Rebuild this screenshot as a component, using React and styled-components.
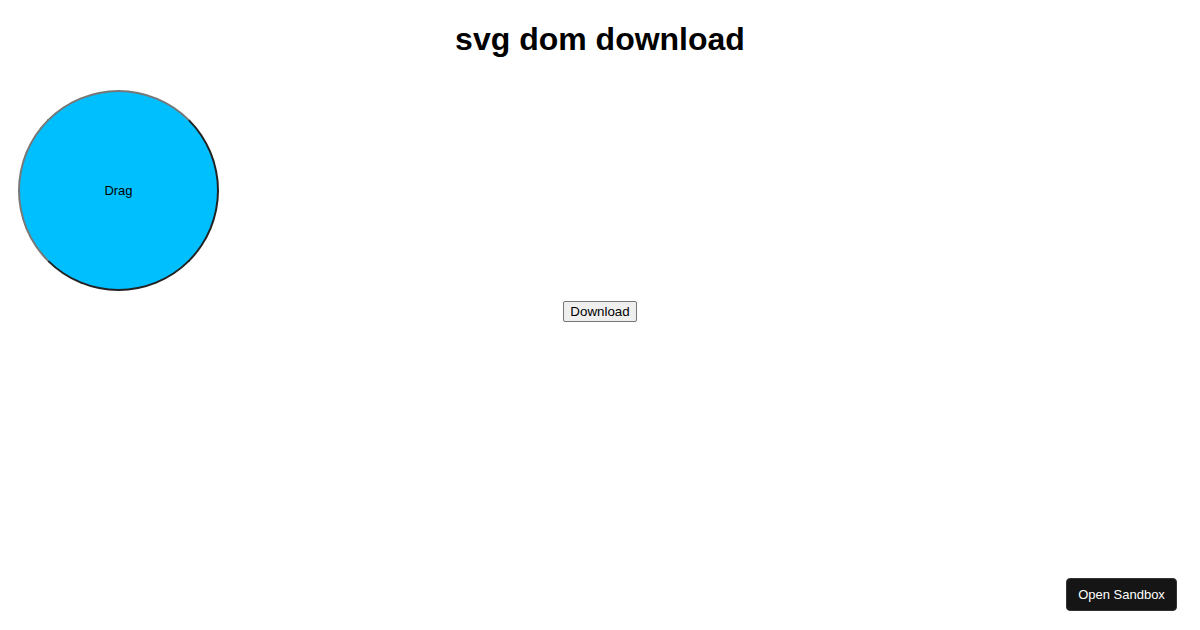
import React from "react";
import styled, { createGlobalStyle } from "styled-components";

const Global = createGlobalStyle`
  html, body { margin: 0; padding: 0; background: #fff; }
  body { font-family: "Liberation Sans", Arial, sans-serif; color: #000; }
`;

const Title = styled.h1`
  margin: 21.44px 0;
  font-size: 32px;
  font-weight: bold;
  text-align: center;
  line-height: 37px;
`;

const Stage = styled.div`
  padding: 10px 18px 9px;
  height: 201px;
`;

const Circle = styled.div`
  box-sizing: border-box;
  width: 201px;
  height: 201px;
  border-radius: 50%;
  border: 2px outset #777;
  background: #00bfff;
  display: flex;
  align-items: center;
  justify-content: center;
  padding-top: 1px;
  font-size: 13px;
  cursor: grab;
  user-select: none;
`;

const Center = styled.div`
  display: flex;
  justify-content: center;
  margin-top: 1px;
`;

const Button = styled.button`
  font-family: "Liberation Sans", Arial, sans-serif;
  font-size: 13.33px;
  padding: 1px 6px;
  border: 1px solid #767676;
  border-radius: 2px;
  background: #efefef;
  color: #000;
  height: 21px;
`;

const Sandbox = styled.a`
  position: fixed;
  right: 23px;
  bottom: 19px;
  width: 111px;
  height: 33px;
  box-sizing: border-box;
  display: flex;
  align-items: center;
  justify-content: center;
  background: #151515;
  color: #fff;
  border-radius: 4px;
  font-size: 13px;
  text-decoration: none;
  border: 1px solid #333;
`;

export default function App() {
  return (
    <>
      <Global />
      <Title>svg dom download</Title>
      <Stage>
        <Circle>Drag</Circle>
      </Stage>
      <Center>
        <Button>Download</Button>
      </Center>
      <Sandbox href="#">Open Sandbox</Sandbox>
    </>
  );
}
